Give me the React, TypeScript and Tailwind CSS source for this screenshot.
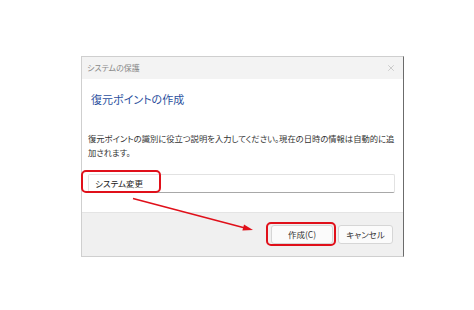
import { X } from 'lucide-react'

const jp = "font-['Noto_Sans_CJK_JP','Noto_Sans',sans-serif] [font-feature-settings:'palt']"

export default function App() {
  return (
    <div className={`relative w-[474px] h-[310px] bg-white overflow-hidden ${jp}`}>
      <div className="pl-[81px] pt-[56px]">
        {/* dialog */}
        <div className="w-[323px] h-[201px] flex flex-col border border-[#cfcfcf] border-r-[#6b6b6b] bg-white">
          <div className="h-[22px] flex items-center justify-between bg-[#f3f3f3] pl-[5px] pr-[7px]">
            <span className="text-[8px] text-[#8a8a8a] leading-none">システムの保護</span>
            <X className="w-[10px] h-[10px] text-[#9c9c9c]" strokeWidth={1.1} />
          </div>

          <div className="flex-1 flex flex-col pl-[6px] pr-[8px]">
            <h1 className="mt-[12px] ml-[3px] text-[11px] leading-[16px] text-[#2c4f9e] font-normal">
              復元ポイントの作成
            </h1>
            <p className="mt-[24px] text-[8.3px] leading-[14px] text-[#333] whitespace-nowrap">
              復元ポイントの識別に役立つ説明を入力してください。現在の日時の情報は自動的に追
              <br />
              加されます。
            </p>
            <div className="mt-[15px] h-[19px] flex items-center bg-white border border-[#e2e2e2] border-b-[#a8a8a8] rounded-[2px] pl-[6px]">
              <span className="text-[8.5px] text-[#222] leading-none">システム変更</span>
            </div>
          </div>

          <div className="h-[44px] bg-[#f0f0f0] border-t border-[#e4e4e4] flex items-center justify-end gap-[5px] pr-[10px]">
            <div className="w-[62px] h-[19px] flex items-center justify-center bg-[#fbfbfb] border border-[#d6d6d6] rounded-[3px] text-[8.5px] text-[#333]">
              作成(C)
            </div>
            <div className="w-[55px] h-[19px] flex items-center justify-center bg-[#fbfbfb] border border-[#d6d6d6] rounded-[3px] text-[8.5px] text-[#333]">
              キャンセル
            </div>
          </div>
        </div>
      </div>

      {/* red annotations */}
      <div className="absolute left-[81px] top-[170px] w-[80px] h-[23px] border-2 border-[#e0101a] rounded-[5px]" />
      <div className="absolute left-[266px] top-[222px] w-[70px] h-[24px] border-2 border-[#e0101a] rounded-[5px]" />
      <svg className="absolute inset-0 pointer-events-none" width="474" height="310" viewBox="0 0 474 310">
        <line x1="133" y1="198.5" x2="246" y2="228.3" stroke="#e0101a" strokeWidth="1.6" />
        <polygon points="253,230 244,224.5 242.4,230.6" fill="#e0101a" />
      </svg>
    </div>
  )
}
